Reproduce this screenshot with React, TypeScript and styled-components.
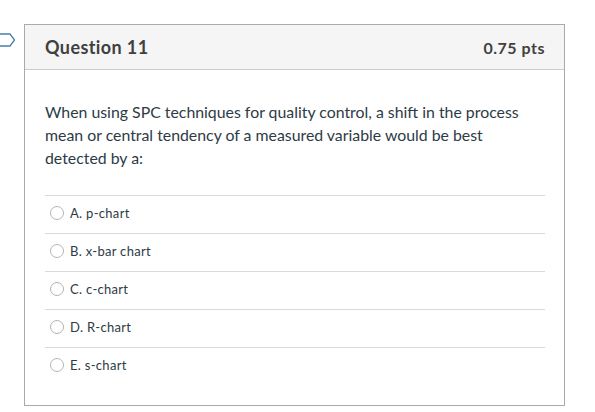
import React from "react";
import styled, { createGlobalStyle } from "styled-components";

const Global = createGlobalStyle`
  html, body { margin: 0; padding: 0; background: #fff; }
  body { font-family: Lato, "Noto Sans", sans-serif; color: #2d3b45; }
`;

const Page = styled.div`
  position: relative;
  padding: 24px 30px 0 24px;
  width: 595px;
  box-sizing: border-box;
`;

const Flag = styled.svg`
  position: absolute;
  left: 0;
  top: 33px;
`;

const Card = styled.div`
  width: 541px;
  height: 382px;
  box-sizing: border-box;
  border: 1px solid #aaaaaa;
  display: flex;
  flex-direction: column;
`;

const Header = styled.div`
  height: 45px;
  box-sizing: border-box;
  background: #f5f5f5;
  border-bottom: 1px solid #c7cdd1;
  display: flex;
  align-items: center;
  justify-content: space-between;
  padding: 0 19px 0 20px;
  color: #404040;
`;

const Title = styled.div`
  font-size: 18px;
  font-weight: 700;
  letter-spacing: 0.4px;
`;

const Points = styled.div`
  font-size: 16px;
  font-weight: 700;
  letter-spacing: 0.5px;
`;

const Body = styled.div`
  padding: 30px 19px 0 20px;
`;

const Prompt = styled.div`
  font-size: 15.85px;
  line-height: 23px;
  margin-bottom: 26px;
`;

const Option = styled.label`
  display: flex;
  align-items: center;
  box-sizing: border-box;
  height: 38px;
  padding-bottom: 3px;
  border-top: 1px solid #dadada;
  padding-left: 5px;
  font-size: 13px;
  letter-spacing: 0.3px;
`;

const Radio = styled.span`
  width: 12px;
  height: 12px;
  border-radius: 50%;
  border: 1px solid #b4b4b4;
  background: #fff;
  margin-right: 6px;
  flex: none;
`;

const options = ["A. p-chart", "B. x-bar chart", "C. c-chart", "D. R-chart", "E. s-chart"];

export default function App() {
  return (
    <>
      <Global />
      <Page>
        <Flag width="16" height="14" viewBox="0 0 16 14">
          <path d="M-1 1 H10 L14.5 7 L10 13 H-1" fill="#fff" stroke="#4a7fa6" strokeWidth="1.3" />
        </Flag>
        <Card>
          <Header>
            <Title>Question 11</Title>
            <Points>0.75 pts</Points>
          </Header>
          <Body>
            <Prompt>
              When using SPC techniques for quality control, a shift in the process mean or central
              tendency of a measured variable would be best detected by a:
            </Prompt>
            {options.map((o) => (
              <Option key={o}>
                <Radio />
                {o}
              </Option>
            ))}
          </Body>
        </Card>
      </Page>
    </>
  );
}
